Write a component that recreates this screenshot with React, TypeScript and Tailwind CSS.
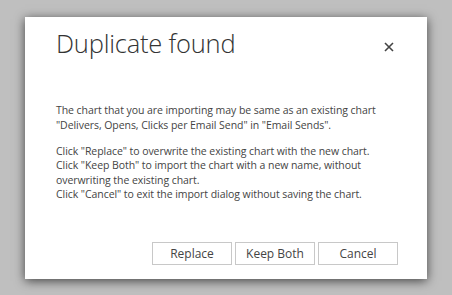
export default function App() {
  return (
    <div className="w-[452px] h-[295px] bg-[#bfbfbf] pt-[17px] pl-[25px] font-['Open_Sans',sans-serif]">
      <div className="w-[402px] h-[262px] bg-white shadow-[0_2px_10px_rgba(0,0,0,0.65)] flex flex-col">
        <div className="flex items-start justify-between pl-[31px] pr-[33px] pt-[9px]">
          <h1 className="text-[25.5px] font-light text-[#333] leading-[34px] tracking-[-0.2px]">Duplicate found</h1>
          <button className="mt-[16px] text-[#444]">
            <svg width="10" height="10" viewBox="0 0 10 10">
              <path d="M1 1L9 9M9 1L1 9" stroke="#444" strokeWidth="1.6" />
            </svg>
          </button>
        </div>
        <div className="pl-[31px] pr-[20px] mt-[43px] text-[10.5px] leading-[14.5px] text-[#444] tracking-[-0.06px]">
          <p>
            The chart that you are importing may be same as an existing chart
            <br />
            "Delivers, Opens, Clicks per Email Send" in "Email Sends".
          </p>
          <p className="mt-[11.5px]">
            Click "Replace" to overwrite the existing chart with the new chart.
            <br />
            Click "Keep Both" to import the chart with a new name, without
            <br />
            overwriting the existing chart.
            <br />
            Click "Cancel" to exit the import dialog without saving the chart.
          </p>
        </div>
        <div className="mt-auto flex justify-end gap-[3px] pr-[29px] pb-[14px]">
          {['Replace', 'Keep Both', 'Cancel'].map((label) => (
            <button
              key={label}
              className="w-[80px] h-[23px] border border-[#c8c8c8] bg-white text-[12px] text-[#444]"
            >
              {label}
            </button>
          ))}
        </div>
      </div>
    </div>
  )
}
